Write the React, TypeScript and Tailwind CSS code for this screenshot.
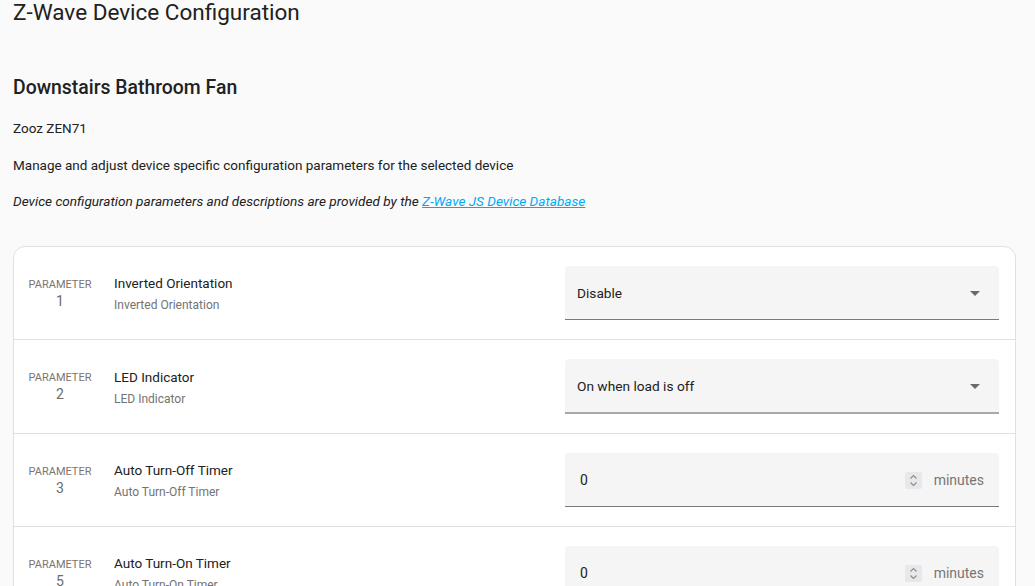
import React from 'react';

type Param = {
  id: number;
  title: string;
  kind: 'select' | 'number';
  value: string;
  thick?: boolean;
};

const params: Param[] = [
  { id: 1, title: 'Inverted Orientation', kind: 'select', value: 'Disable' },
  { id: 2, title: 'LED Indicator', kind: 'select', value: 'On when load is off', thick: true },
  { id: 3, title: 'Auto Turn-Off Timer', kind: 'number', value: '0' },
  { id: 5, title: 'Auto Turn-On Timer', kind: 'number', value: '0' },
];

const Spinner = () => (
  <div className="w-[17px] h-[17px] bg-[#e8e8ec] flex items-center justify-center rounded-[2px]">
    <svg width="9" height="13" viewBox="0 0 9 13" fill="none" stroke="#8a8a8a" strokeWidth="1.1">
      <path d="M1.5 4.5 L4.5 1.5 L7.5 4.5" />
      <path d="M1.5 8.5 L4.5 11.5 L7.5 8.5" />
    </svg>
  </div>
);

const Field = ({ p }: { p: Param }) => {
  if (p.kind === 'select') {
    return (
      <div
        className={`w-[434px] bg-[#f5f5f5] rounded-t-[4px] flex items-center pl-3 pr-[19px] pt-[1px] ${
          p.thick ? 'h-[55px] border-b-2 border-[#a9a9a9]' : 'h-[54px] border-b border-[#7b7b7b]'
        }`}
      >
        <span className="flex-1 text-[13.7px] text-[#212121]">{p.value}</span>
        <svg width="10" height="5" viewBox="0 0 10 5">
          <path d="M0 0 L10 0 L5 5 Z" fill="#6a6a6a" />
        </svg>
      </div>
    );
  }
  return (
    <div className="w-[434px] h-[54px] bg-[#f5f5f5] rounded-t-[4px] flex items-center pl-[15px] pr-[15px] pt-[1px] border-b border-[#7b7b7b]">
      <span className="flex-1 text-[14px] text-[#212121]">{p.value}</span>
      <Spinner />
      <span className="ml-3 text-[14px] text-[#757575]">minutes</span>
    </div>
  );
};

const ParamRow = ({ p, last }: { p: Param; last: boolean }) => (
  <div className={`flex items-center py-[19px] ${last ? '' : 'border-b border-[#e0e0e0]'}`}>
    <div className="w-[64px] ml-[14px] pt-[1px] flex flex-col items-center">
      <span className="text-[11px] leading-[14px] uppercase text-[#7d7470]">Parameter</span>
      <span className="text-[14px] leading-[18px] text-[#6b6b6b]">{p.id}</span>
    </div>
    <div className="flex-1 ml-[22px] pt-[1px] flex flex-col">
      <span className="text-[13.5px] leading-[20px] text-[#212121]">{p.title}</span>
      <span className="text-[12px] leading-[18px] text-[#737373] mt-[3px]">{p.title}</span>
    </div>
    <div className="mr-4">
      <Field p={p} />
    </div>
  </div>
);

const App = () => {
  return (
    <div className="min-h-screen bg-[#fafafa] font-['Roboto',sans-serif] text-[#212121] px-[13px] overflow-hidden h-[586px]">
      <h1 className="text-[22.5px] leading-[24px] font-normal">Z-Wave Device Configuration</h1>
      <h2 className="mt-[52px] text-[19.4px] leading-[24px] font-medium">Downstairs Bathroom Fan</h2>
      <p className="mt-[18px] text-[13.5px] leading-[20px]">Zooz ZEN71</p>
      <p className="mt-[17px] text-[13.5px] leading-[20px]">
        Manage and adjust device specific configuration parameters for the selected device
      </p>
      <p className="mt-[16px] text-[13.6px] leading-[20px] italic">
        Device configuration parameters and descriptions are provided by the{' '}
        <a className="text-[#03a9f4] underline">Z-Wave JS Device Database</a>
      </p>
      <div className="mt-[35px] w-[1003px] bg-white border border-[#e0e0e0] rounded-[12px]">
        {params.map((p, i) => (
          <ParamRow key={p.id} p={p} last={i === params.length - 1} />
        ))}
      </div>
    </div>
  );
};

export default App;
